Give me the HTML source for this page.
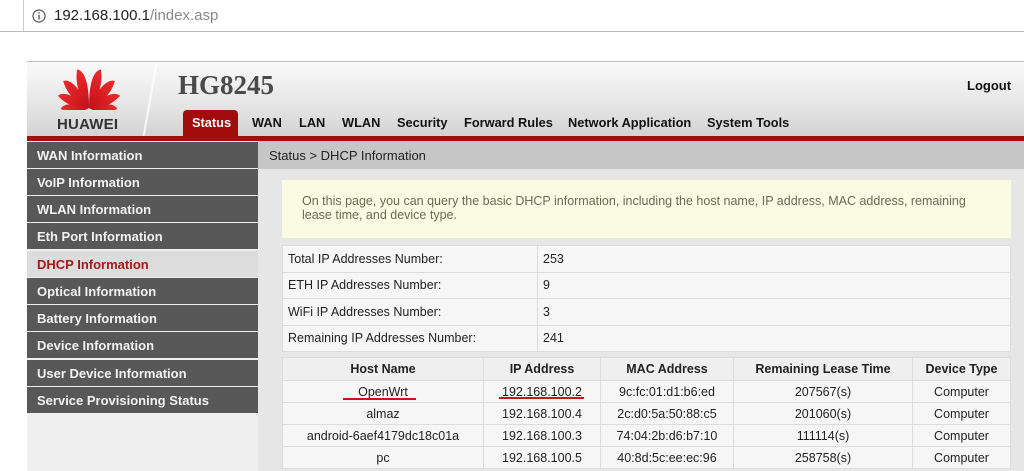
<!DOCTYPE html>
<html><head><style>
*{margin:0;padding:0;box-sizing:border-box}
body{width:1024px;height:471px;overflow:hidden;background:#fff;font-family:"Liberation Sans",sans-serif;position:relative}
.abs{position:absolute}
.url{left:0;top:0;width:1024px;height:32px;border-bottom:1px solid #bbb}
.url .t{left:54px;top:7px;font-size:15px;color:#222}
.hdr{left:27px;top:61px;width:997px;height:76px;background:linear-gradient(#fafafa,#e4e4e4 60%,#d2d2d2);border-top:1px solid #bbb}
.red{left:27px;top:136px;width:997px;height:5px;background:#a30c0c}
.nav{top:115px;font-size:12.8px;font-weight:bold;color:#111}
.side{left:27px;top:141px;width:231px;height:330px;background:#efefef}
.si{position:absolute;left:0;width:231px;height:26px;background:#585858;color:#f2f2f2;font-size:13px;font-weight:bold;padding:6px 0 0 10px}
.content{left:258px;top:141px;width:766px;height:330px;background:#e6e6e6}
.crumb{left:258px;top:141px;width:766px;height:28px;background:#c6c6c6;font-size:13px;color:#222;padding:7px 0 0 11px}
.info{left:282px;top:180px;width:729px;height:58px;background:#fbfbe3;color:#6b6b55;font-size:12.5px;padding:14px 0 0 20px;line-height:14px}
table{position:absolute;border-collapse:collapse;font-size:12.5px;color:#222}
td,th{border:1px solid #dcdcdc;background:#f6f6f6}
.st td{height:26.5px;padding-left:5px}
.ht th{height:23px;font-weight:bold;text-align:center;background:#efefef}
.ht td{height:22px;text-align:center}
</style></head><body>
<div class="abs url"><div class="abs" style="left:23px;top:0;width:1px;height:31px;background:#ccc"></div><svg class="abs" style="left:32px;top:9px" width="14" height="14"><circle cx="7" cy="7" r="6" fill="none" stroke="#555" stroke-width="1.2"/><rect x="6.3" y="6" width="1.4" height="4.5" fill="#555"/><rect x="6.3" y="3.3" width="1.4" height="1.4" fill="#555"/></svg>
<div class="abs t">192.168.100.1<span style="color:#888">/index.asp</span></div></div>
<div class="abs hdr"></div>
<svg class="abs" style="left:52px;top:64px" width="74" height="46" viewBox="0 0 74 46">
<defs><linearGradient id="g" x1="0" y1="0" x2="0" y2="1"><stop offset="0" stop-color="#ee2a2a"/><stop offset="1" stop-color="#c0101a"/></linearGradient></defs>
<g fill="url(#g)" transform="translate(37,44)">
<path transform="rotate(-10)" d="M0,0 C-7,-10 -10,-26 -5,-40 C1,-38 5,-28 0,0Z"/>
<path transform="rotate(-36)" d="M0,0 C-7,-10 -10,-24 -5,-37 C1,-35 5,-25 0,0Z"/>
<path transform="rotate(-60)" d="M0,0 C-6,-8 -9,-20 -5,-33 C1,-31 4,-22 0,0Z"/>
<path transform="rotate(-82)" d="M0,0 C-5,-6 -8,-16 -5,-28 C1,-26 3,-18 0,0Z"/>
<path transform="scale(-1,1) rotate(-10)" d="M0,0 C-7,-10 -10,-26 -5,-40 C1,-38 5,-28 0,0Z"/>
<path transform="scale(-1,1) rotate(-36)" d="M0,0 C-7,-10 -10,-24 -5,-37 C1,-35 5,-25 0,0Z"/>
<path transform="scale(-1,1) rotate(-60)" d="M0,0 C-6,-8 -9,-20 -5,-33 C1,-31 4,-22 0,0Z"/>
<path transform="scale(-1,1) rotate(-82)" d="M0,0 C-5,-6 -8,-16 -5,-28 C1,-26 3,-18 0,0Z"/>
</g></svg>
<div class="abs" style="left:57px;top:116px;font-size:15px;font-weight:bold;color:#333;letter-spacing:0.2px">HUAWEI</div>
<div class="abs" style="left:140px;top:64px;width:20px;height:72px;background:linear-gradient(100deg,transparent 45%,#fff 50%,transparent 55%)"></div>
<div class="abs" style="left:178px;top:70px;font-family:'Liberation Serif',serif;font-weight:bold;font-size:27px;color:#4a4a4a">HG8245</div>
<div class="abs" style="left:967px;top:78px;font-size:13px;font-weight:bold;color:#111">Logout</div>
<div class="abs" style="left:183px;top:110px;width:55px;height:27px;background:#a30c0c;border-radius:4px 4px 0 0"></div>
<div class="abs nav" style="left:192px;color:#fff">Status</div>
<div class="abs nav" style="left:252px">WAN</div>
<div class="abs nav" style="left:299px">LAN</div>
<div class="abs nav" style="left:342px">WLAN</div>
<div class="abs nav" style="left:397px">Security</div>
<div class="abs nav" style="left:464px">Forward Rules</div>
<div class="abs nav" style="left:568px">Network Application</div>
<div class="abs nav" style="left:707px">System Tools</div>
<div class="abs red"></div>
<div class="abs side">
<div class="si" style="top:1px">WAN Information</div>
<div class="si" style="top:28px">VoIP Information</div>
<div class="si" style="top:55px">WLAN Information</div>
<div class="si" style="top:82px">Eth Port Information</div>
<div class="si" style="top:110px;background:#dcdcdc;color:#a61a1a">DHCP Information</div>
<div class="si" style="top:137px">Optical Information</div>
<div class="si" style="top:164px">Battery Information</div>
<div class="si" style="top:191px">Device Information</div>
<div class="si" style="top:219px">User Device Information</div>
<div class="si" style="top:246px">Service Provisioning Status</div>
</div>
<div class="abs content"></div>
<div class="abs crumb">Status &gt; DHCP Information</div>
<div class="abs info">On this page, you can query the basic DHCP information, including the host name, IP address, MAC address, remaining<br>lease time, and device type.</div>
<table class="st" style="left:282px;top:245px;width:729px">
<tr><td style="width:255px">Total IP Addresses Number:</td><td>253</td></tr>
<tr><td>ETH IP Addresses Number:</td><td>9</td></tr>
<tr><td>WiFi IP Addresses Number:</td><td>3</td></tr>
<tr><td>Remaining IP Addresses Number:</td><td>241</td></tr>
</table>
<table class="ht" style="left:282px;top:357px;width:729px">
<tr><th style="width:201px">Host Name</th><th style="width:117px">IP Address</th><th style="width:133px">MAC Address</th><th style="width:179px">Remaining Lease Time</th><th>Device Type</th></tr>
<tr><td>OpenWrt</td><td>192.168.100.2</td><td>9c:fc:01:d1:b6:ed</td><td>207567(s)</td><td>Computer</td></tr>
<tr><td>almaz</td><td>192.168.100.4</td><td>2c:d0:5a:50:88:c5</td><td>201060(s)</td><td>Computer</td></tr>
<tr><td>android-6aef4179dc18c01a</td><td>192.168.100.3</td><td>74:04:2b:d6:b7:10</td><td>111114(s)</td><td>Computer</td></tr>
<tr><td>pc</td><td>192.168.100.5</td><td>40:8d:5c:ee:ec:96</td><td>258758(s)</td><td>Computer</td></tr>
</table>
<div class="abs" style="left:343px;top:398px;width:73px;height:2px;background:#d0101a"></div>
<div class="abs" style="left:499px;top:397px;width:85px;height:2px;background:#d0101a"></div>
</body></html>
